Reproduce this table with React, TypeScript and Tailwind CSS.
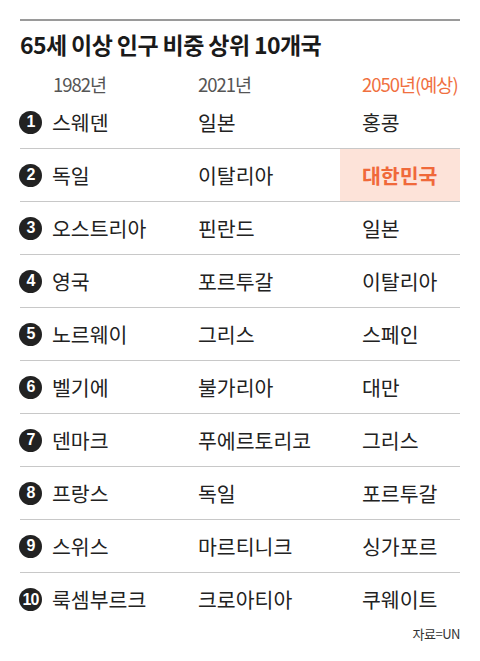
const rows: [string, string, string][] = [
  ['스웨덴', '일본', '홍콩'],
  ['독일', '이탈리아', '대한민국'],
  ['오스트리아', '핀란드', '일본'],
  ['영국', '포르투갈', '이탈리아'],
  ['노르웨이', '그리스', '스페인'],
  ['벨기에', '불가리아', '대만'],
  ['덴마크', '푸에르토리코', '그리스'],
  ['프랑스', '독일', '포르투갈'],
  ['스위스', '마르티니크', '싱가포르'],
  ['룩셈부르크', '크로아티아', '쿠웨이트'],
];

const kr = "font-['Noto_Sans_CJK_KR',sans-serif]";

export default function App() {
  return (
    <div className={`w-[480px] h-[661px] bg-white px-5 pt-[19px] ${kr}`}>
      <div className="border-t-2 border-[#9a9a9a]" />
      <h1 className="mt-[9px] text-[23px] leading-[28px] font-bold text-[#1a1a1a] tracking-[-0.6px]">
        65세 이상 인구 비중 상위 10개국
      </h1>
      <div className="flex mt-[16px] h-[22px] items-center text-[18.5px] tracking-[-1px] font-['Liberation_Sans_Narrow','Noto_Sans_CJK_KR',sans-serif]">
        <div className="w-[178px] pl-[33px] text-[#555]">1982년</div>
        <div className="w-[142px] text-[#555]">2021년</div>
        <div className="flex-1 pl-[22px] text-[#f0703f]">2050년(예상)</div>
      </div>
      <div>
        {rows.map((r, i) => (
          <div
            key={i}
            className={`flex h-[53px] items-stretch ${i < rows.length - 1 ? 'border-b border-[#c8c8c8]' : ''}`}
          >
            <div className="w-[178px] flex items-center">
              <span className="w-[23px] h-[23px] -ml-[1px] rounded-full bg-[#222] text-white flex items-center justify-center text-[16px] font-bold tracking-[-1px] font-['Liberation_Sans',sans-serif]">
                {i + 1}
              </span>
              <span className="ml-[10px] text-[20.5px] text-[#222]">{r[0]}</span>
            </div>
            <div className="w-[142px] flex items-center text-[20.5px] text-[#222]">{r[1]}</div>
            {i === 1 ? (
              <div className="flex-1 flex items-center pl-[22px] bg-[#fde3d9] text-[20.5px] font-bold text-[#f0693a]">
                {r[2]}
              </div>
            ) : (
              <div className="flex-1 flex items-center pl-[22px] text-[20.5px] text-[#222]">{r[2]}</div>
            )}
          </div>
        ))}
      </div>
      <div className="text-right text-[13px] leading-[16px] text-[#333] tracking-[-0.5px] mt-[0px]">자료=UN</div>
    </div>
  );
}
